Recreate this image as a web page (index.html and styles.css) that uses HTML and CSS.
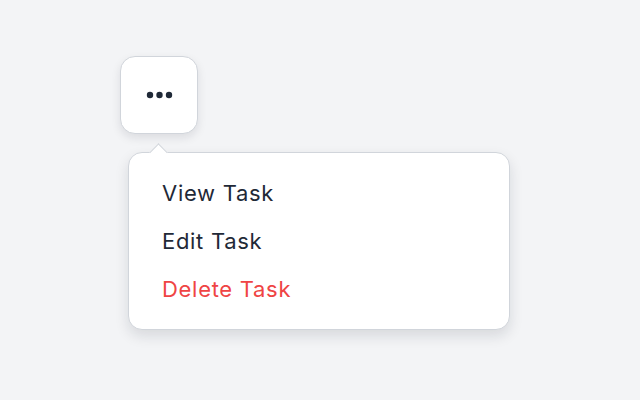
FILE: index.html
```html
<!DOCTYPE html>
<html>
<head>
<meta charset="utf-8">
<link rel="stylesheet" href="styles.css">
</head>
<body>
<div class="stage">
  <button class="trigger" aria-label="More options">
    <svg width="27" height="8" viewBox="0 0 27 8"><circle cx="4" cy="4" r="3.2" fill="#1f2937"/><circle cx="13.5" cy="4" r="3.2" fill="#1f2937"/><circle cx="23" cy="4" r="3.2" fill="#1f2937"/></svg>
  </button>
  <div class="menu">
    <span class="arrow"></span>
    <div class="item">View Task</div>
    <div class="item">Edit Task</div>
    <div class="item danger">Delete Task</div>
  </div>
</div>
</body>
</html>
```
FILE: styles.css
```css
html, body {
  margin: 0;
  padding: 0;
  background: #f3f4f6;
  width: 640px;
  height: 400px;
  overflow: hidden;
  font-family: Inter, "Noto Sans", sans-serif;
}
.stage {
  display: flex;
  flex-direction: column;
  align-items: flex-start;
  padding: 56px 0 0 120px;
}
.trigger {
  width: 78px;
  height: 78px;
  box-sizing: border-box;
  border: 1.5px solid #d1d5db;
  border-radius: 15px;
  background: #ffffff;
  box-shadow: 0 4px 10px rgba(17, 24, 39, 0.1);
  display: flex;
  align-items: center;
  justify-content: center;
  padding: 0;
}
.menu {
  position: relative;
  margin: 18px 0 0 8px;
  width: 382px;
  box-sizing: border-box;
  background: #ffffff;
  border: 1.5px solid #d1d5db;
  border-radius: 14px;
  box-shadow: 0 6px 14px rgba(17, 24, 39, 0.12);
  padding: 16px 0;
}
.arrow {
  position: absolute;
  top: -7px;
  left: 23px;
  width: 12px;
  height: 12px;
  background: #ffffff;
  border-left: 1.5px solid #d1d5db;
  border-top: 1.5px solid #d1d5db;
  transform: rotate(45deg);
}
.item {
  padding: 12px 33px;
  font-size: 22px;
  line-height: 24px;
  letter-spacing: 0.7px;
  color: #1f2937;
}
.item.danger {
  color: #ef4444;
}
```
